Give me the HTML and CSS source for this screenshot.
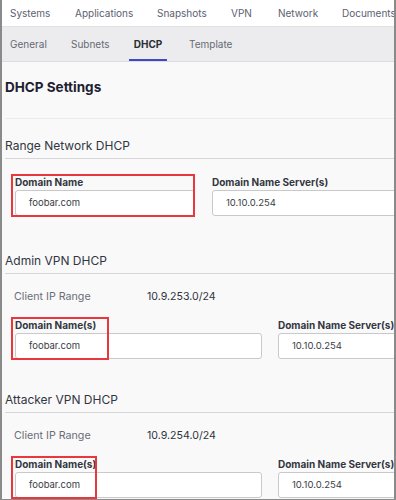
FILE: index.html
```html
<!DOCTYPE html>
<html>
<head>
<meta charset="utf-8">
<link rel="stylesheet" href="styles.css">
</head>
<body>
<div class="frame">
  <nav class="topnav">
    <span class="tn t1">Systems</span>
    <span class="tn t2">Applications</span>
    <span class="tn t3">Snapshots</span>
    <span class="tn t4">VPN</span>
    <span class="tn t5">Network</span>
    <span class="tn t6">Documents</span>
  </nav>
  <nav class="subnav">
    <span class="st s1">General</span>
    <span class="st s2">Subnets</span>
    <span class="st s3 active">DHCP</span>
    <span class="st s4">Template</span>
  </nav>
  <main class="content">
    <h1 class="page-title">DHCP Settings</h1>

    <section class="sec sec1">
      <h2 class="sec-title">Range Network DHCP</h2>
      <div class="fields f-narrow">
        <div class="field left">
          <label class="lbl">Domain Name</label>
          <div class="input">foobar.com</div>
          <span class="hl hl1"></span>
        </div>
        <div class="field right">
          <label class="lbl">Domain Name Server(s)</label>
          <div class="input">10.10.0.254</div>
        </div>
      </div>
    </section>

    <section class="sec sec2">
      <h2 class="sec-title">Admin VPN DHCP</h2>
      <div class="kv"><span class="k">Client IP Range</span><span class="v">10.9.253.0/24</span></div>
      <div class="fields f-wide">
        <div class="field left">
          <label class="lbl">Domain Name(s)</label>
          <div class="input">foobar.com</div>
          <span class="hl hl2"></span>
        </div>
        <div class="field right">
          <label class="lbl">Domain Name Server(s)</label>
          <div class="input">10.10.0.254</div>
        </div>
      </div>
    </section>

    <section class="sec sec3">
      <h2 class="sec-title">Attacker VPN DHCP</h2>
      <div class="kv"><span class="k">Client IP Range</span><span class="v">10.9.254.0/24</span></div>
      <div class="fields f-wide">
        <div class="field left">
          <label class="lbl">Domain Name(s)</label>
          <div class="input">foobar.com</div>
          <span class="hl hl3"></span>
        </div>
        <div class="field right">
          <label class="lbl">Domain Name Server(s)</label>
          <div class="input">10.10.0.254</div>
        </div>
      </div>
    </section>
  </main>
</div>
</body>
</html>
```

FILE: styles.css
```css
* { box-sizing: border-box; }
html, body { margin: 0; padding: 0; }
body {
  font-family: Inter, "Noto Sans", sans-serif;
  background: #fff;
  width: 396px;
  height: 500px;
  overflow: hidden;
}
.frame {
  width: 396px;
  height: 500px;
  border-left: 2px solid #8a8a8a;
  border-right: 2px solid #8a8a8a;
  border-bottom: 1px solid #8a8a8a;
  overflow: hidden;
  background: #f9f9fa;
}
.topnav {
  height: 27px;
  background: #fff;
  border-bottom: 1px solid #e2e2e4;
  display: flex;
  align-items: center;
  white-space: nowrap;
  font-size: 10px;
  color: #5b6170;
  padding-left: 8px;
}
.tn { display: block; flex: none; }
.t1 { width: 65px; }
.t2 { width: 82px; }
.t3 { width: 74px; }
.t4 { width: 47px; }
.t5 { width: 64px; }
.t6 { width: 60px; }

.subnav {
  height: 35px;
  background: #ececee;
  border-bottom: 1px solid #dcdcde;
  display: flex;
  align-items: stretch;
  font-size: 10px;
  color: #666a74;
  padding-left: 2px;
  white-space: nowrap;
}
.st {
  display: flex;
  align-items: center;
  flex: none;
  padding: 2px 0 0 6px;
  border-bottom: 2px solid transparent;
}
.s1 { width: 61px; }
.s2 { width: 64px; }
.s3 { width: 38px; justify-content: center; padding-left: 0; }
.s4 { margin-left: 16px; padding-left: 6px; }
.st.active {
  font-weight: 700;
  color: #2a2d36;
  border-bottom-color: #4148c6;
}

.content { padding: 0 0 0 3px; }
.page-title {
  margin: 16px 0 0 0;
  font-size: 13.5px;
  line-height: 18px;
  font-weight: 700;
  color: #1e2030;
  padding-bottom: 22px;
  border-bottom: 1px solid #ececee;
}
.sec-title {
  margin: 0;
  font-size: 12px;
  line-height: 16px;
  font-weight: 400;
  color: #33363f;
  padding-bottom: 4px;
  border-bottom: 1px solid #d6d6d9;
}
.sec1 { margin-top: 19px; }
.sec2 { margin-top: 37px; }
.sec3 { margin-top: 33px; }

.kv {
  display: flex;
  margin: 16px 0 0 9px;
  font-size: 10.7px;
  line-height: 14px;
}
.k { width: 133px; color: #6a6d75; }
.v { color: #30333b; font-size: 10.6px; }

.fields {
  display: flex;
  padding-left: 10px;
}
.sec1 .fields { margin-top: 16px; column-gap: 17px; }
.sec2 .fields, .sec3 .fields { margin-top: 14px; column-gap: 16px; }
.field { position: relative; flex: none; }
.f-narrow .left { width: 180px; }
.f-wide .left { width: 247px; }
.right { width: 220px; }
.lbl {
  display: block;
  font-size: 10px;
  line-height: 14px;
  font-weight: 700;
  color: #33363f;
  white-space: nowrap;
}
.input {
  margin-top: 1px;
  height: 26px;
  background: #fff;
  border: 1px solid #c9c9cc;
  border-radius: 3px;
  font-size: 9.5px;
  line-height: 24px;
  color: #3a3d45;
  padding-left: 13px;
}
.hl {
  position: absolute;
  left: -4px;
  top: -1px;
  height: 43px;
  border: 2px solid #e8383d;
  pointer-events: none;
}
.hl1 { width: 184px; }
.hl2 { width: 98px; }
.hl3 { width: 86px; }
```
